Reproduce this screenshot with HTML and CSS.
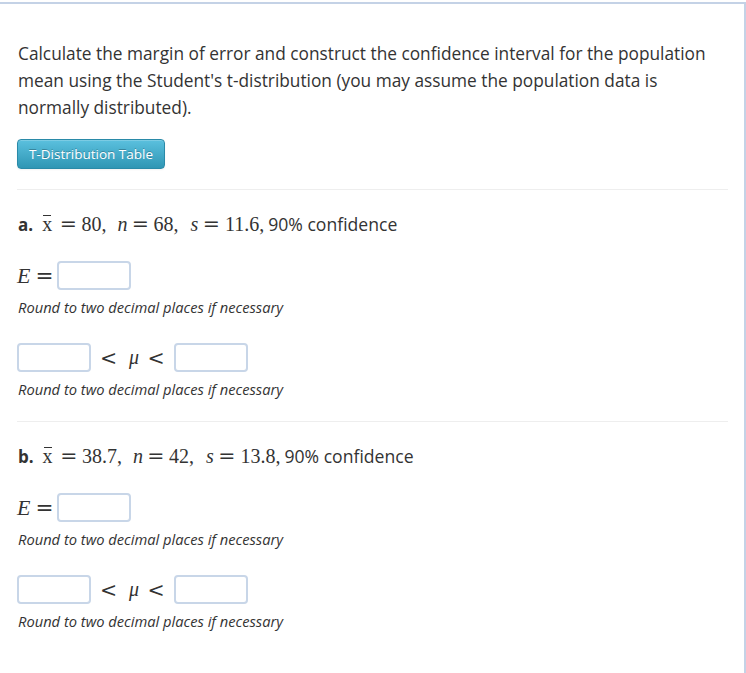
FILE: index.html
```html
<!DOCTYPE html>
<html>
<head>
<meta charset="utf-8">
<link rel="stylesheet" href="styles.css">
</head>
<body>
<div class="frame">
  <p class="intro">Calculate the margin of error and construct the confidence interval for the population mean using the Student's t-distribution (you may assume the population data is normally distributed).</p>
  <div class="btn-row"><button class="btn">T-Distribution Table</button></div>

  <section class="part">
    <div class="title"><b class="label">a.</b><span class="m xbar">x</span><span class="m rel r1">=</span><span class="m num n1">80,</span><span class="m var v-n">n</span><span class="m rel r2">=</span><span class="m num n2">68,</span><span class="m var v-s">s</span><span class="m rel r3">=</span><span class="m num n3">11.6,</span><span class="conf">90% confidence</span></div>
    <div class="row e-row"><span class="m var v-e">E</span><span class="m rel re">=</span><span class="box box-e"></span></div>
    <div class="hint">Round to two decimal places if necessary</div>
    <div class="row ci-row"><span class="box box-l"></span><span class="m rel lt1">&lt;</span><span class="m var v-mu">μ</span><span class="m rel lt2">&lt;</span><span class="box box-r"></span></div>
    <div class="hint">Round to two decimal places if necessary</div>
  </section>

  <section class="part">
    <div class="title"><b class="label">b.</b><span class="m xbar">x</span><span class="m rel r1">=</span><span class="m num n1">38.7,</span><span class="m var v-n">n</span><span class="m rel r2">=</span><span class="m num n2">42,</span><span class="m var v-s">s</span><span class="m rel r3">=</span><span class="m num n3">13.8,</span><span class="conf">90% confidence</span></div>
    <div class="row e-row"><span class="m var v-e">E</span><span class="m rel re">=</span><span class="box box-e"></span></div>
    <div class="hint">Round to two decimal places if necessary</div>
    <div class="row ci-row"><span class="box box-l"></span><span class="m rel lt1">&lt;</span><span class="m var v-mu">μ</span><span class="m rel lt2">&lt;</span><span class="box box-r"></span></div>
    <div class="hint">Round to two decimal places if necessary</div>
  </section>
</div>
</body>
</html>
```
FILE: styles.css
```css
html, body {
  margin: 0;
  padding: 0;
  background: #ffffff;
}
body {
  font-family: "Open Sans", "Liberation Sans", sans-serif;
  color: #333333;
  font-size: 17.3px;
}
.frame {
  box-sizing: border-box;
  width: 746px;
  min-height: 671px;
  margin-top: 2px;
  border-top: 2px solid #c4d2e6;
  border-right: 2px solid #c4d2e6;
  padding: 36px 16px 0 18px;
}
.intro {
  margin: 0;
  line-height: 27px;
  font-size: 17.3px;
}
.btn-row {
  margin-top: 18px;
  margin-left: -1px;
}
.btn {
  display: block;
  height: 30px;
  width: 148px;
  padding: 0;
  border: 1px solid #2a8aa8;
  border-radius: 4px;
  background: linear-gradient(#5bc0de, #2f96b4);
  color: #ffffff;
  font-family: "Open Sans", sans-serif;
  font-size: 13.5px;
  text-shadow: 0 -1px 0 rgba(0,0,0,0.25);
  box-shadow: inset 0 1px 0 rgba(255,255,255,0.2), 0 1px 2px rgba(0,0,0,0.05);
}
.part {
  border-top: 1px solid #eeeeee;
  margin-top: 20px;
  margin-left: -1px;
  padding-left: 1px;
}
.part + .part {
  margin-top: 22px;
}
.title {
  margin-top: 22px;
  line-height: 24px;
  height: 24px;
  display: flex;
  align-items: baseline;
  white-space: pre;
}
.label {
  font-weight: bold;
  font-size: 17px;
}
.conf {
  font-size: 17.6px;
  margin-left: 4px;
}
.m {
  font-family: "Liberation Serif", serif;
  font-size: 20px;
}
.var {
  font-style: italic;
}
.rel {
  font-family: "DejaVu Serif", serif;
  font-size: 20.5px;
}
.xbar {
  position: relative;
  margin-left: 9px;
}
.xbar::before {
  content: "";
  position: absolute;
  left: 1px;
  right: 1px;
  top: 3px;
  border-top: 1px solid #333333;
}
.r1 { margin-left: 7.7px; }
.n1 { margin-left: 4.6px; }
.v-n { margin-left: 11px; }
.r2 { margin-left: 4.2px; }
.n2 { margin-left: 4.6px; }
.v-s { margin-left: 12px; }
.r3 { margin-left: 4.4px; }
.n3 { margin-left: 5px; }
.row {
  display: flex;
  align-items: center;
  height: 29px;
}
.e-row {
  margin-top: 25px;
}
.v-e {
  margin-left: -1px;
  font-size: 22px;
}
.re {
  margin-left: 5px;
  font-size: 21.5px;
}
.box-e { margin-left: 3.5px; }
.ci-row {
  margin-top: 26px;
}
.box-l { margin-left: -1px; }
.lt1 { margin-left: 9px; }
.v-mu { margin-left: 11.8px; }
.lt2 { margin-left: 8.5px; }
.box-r { margin-left: 8.8px; }
.box {
  box-sizing: border-box;
  width: 74px;
  height: 29px;
  border: 2px solid #c8d6e8;
  border-radius: 4px;
  background: #ffffff;
}
.hint {
  margin-top: 7px;
  line-height: 20px;
  font-size: 14.7px;
  font-style: italic;
}
```
